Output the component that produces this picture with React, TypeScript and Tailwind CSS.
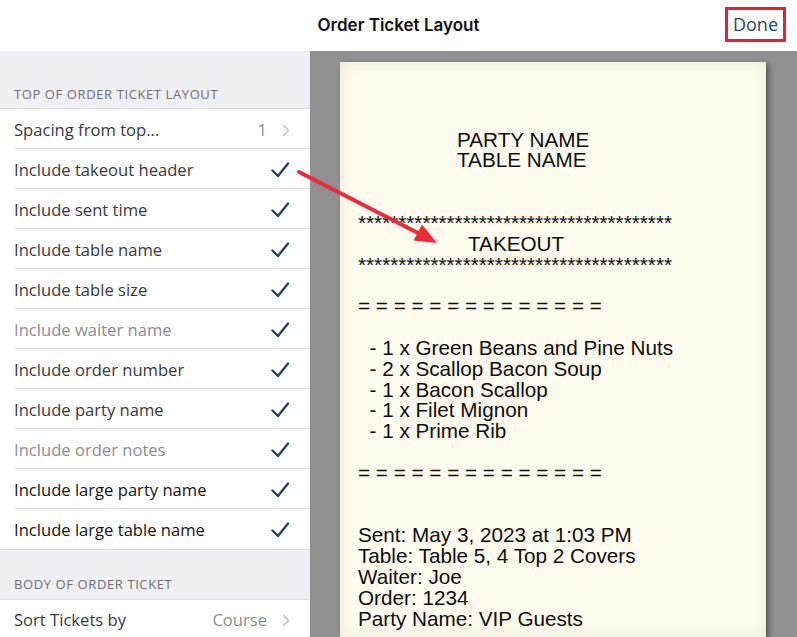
import React from "react";

const listFont = { fontFamily: '"Open Sans", "Noto Sans", sans-serif' };

function Check() {
  return (
    <svg width="19" height="16" viewBox="0 0 19 16" fill="none">
      <path d="M1.5 8.5 L7 14 L17 1.5" stroke="#1c4756" strokeWidth="2.4" strokeLinecap="round" strokeLinejoin="round" />
    </svg>
  );
}

function Chevron() {
  return (
    <svg width="8" height="13" viewBox="0 0 8 13" fill="none">
      <path d="M1.5 1.5 L6.5 6.5 L1.5 11.5" stroke="#c4c4c8" strokeWidth="1.6" strokeLinecap="round" strokeLinejoin="round" />
    </svg>
  );
}

type Row = { label: string; tone: "normal" | "muted" | "dark"; value?: string; chevron?: boolean; check?: boolean };

const topRows: Row[] = [
  { label: "Spacing from top...", tone: "normal", value: "1", chevron: true },
  { label: "Include takeout header", tone: "normal", check: true },
  { label: "Include sent time", tone: "normal", check: true },
  { label: "Include table name", tone: "normal", check: true },
  { label: "Include table size", tone: "normal", check: true },
  { label: "Include waiter name", tone: "muted", check: true },
  { label: "Include order number", tone: "normal", check: true },
  { label: "Include party name", tone: "normal", check: true },
  { label: "Include order notes", tone: "muted", check: true },
  { label: "Include large party name", tone: "dark", check: true },
  { label: "Include large table name", tone: "dark", check: true },
];

function ListRow({ row, last }: { row: Row; last: boolean }) {
  const color = row.tone === "muted" ? "text-[#8d8d8f]" : row.tone === "dark" ? "text-[#141414]" : "text-[#3a3a3a]";
  return (
    <div className="pl-[14px] bg-white">
      <div className={`h-[40px] flex items-center pr-[20px] pt-[3px] ${last ? "" : "border-b border-[#dcdce0]"}`}>
        <span className={`flex-1 text-[16.6px] ${color}`} style={listFont}>{row.label}</span>
        {row.value && <span className="text-[16.6px] text-[#8d8d8f] mr-[15px]" style={listFont}>{row.value}</span>}
        {row.chevron && <Chevron />}
        {row.check && <span className="-mt-[1px]"><Check /></span>}
      </div>
    </div>
  );
}

const stars = "*".repeat(39);
const eqs = Array(14).fill("=").join(" ");

type Line = { t: string; pl?: number };
const lines: Line[] = [
  { t: "PARTY NAME", pl: 99 },
  { t: "TABLE NAME", pl: 99 },
  { t: "" },
  { t: "" },
  { t: stars },
  { t: "TAKEOUT", pl: 110 },
  { t: stars },
  { t: "" },
  { t: eqs },
  { t: "" },
  { t: "  - 1 x Green Beans and Pine Nuts" },
  { t: "  - 2 x Scallop Bacon Soup" },
  { t: "  - 1 x Bacon Scallop" },
  { t: "  - 1 x Filet Mignon" },
  { t: "  - 1 x Prime Rib" },
  { t: "" },
  { t: eqs },
  { t: "" },
  { t: "" },
  { t: "Sent: May 3, 2023 at 1:03 PM" },
  { t: "Table: Table 5, 4 Top 2 Covers" },
  { t: "Waiter: Joe" },
  { t: "Order: 1234" },
  { t: "Party Name: VIP Guests" },
  { t: "" },
];

export default function App() {
  return (
    <div className="relative w-[797px] h-[637px] overflow-hidden bg-white flex flex-col">
      {/* Header */}
      <div className="h-[51px] shrink-0 flex items-center relative bg-white">
        <div className="flex-1 text-center text-[17px] font-semibold text-[#111] pt-[1px]" style={{ fontFamily: 'Inter, "Liberation Sans", sans-serif' }}>
          Order Ticket Layout
        </div>
        <div className="absolute right-[11px] top-[7px] w-[61px] h-[35px] border-[3px] border-[#e8202e] flex items-center justify-center">
          <span className="text-[18px] text-[#1f4b60]" style={listFont}>Done</span>
        </div>
      </div>

      <div className="flex flex-1 min-h-0">
        {/* Left settings list */}
        <div className="w-[310px] shrink-0 bg-[#efeff4] flex flex-col">
          <div className="h-[58px] shrink-0 flex items-end pl-[14px] pb-[4px] border-b border-[#dcdce0]">
            <span className="text-[13px] text-[#6e6e73] tracking-[0.6px]" style={listFont}>TOP OF ORDER TICKET LAYOUT</span>
          </div>
          {topRows.map((r, i) => (
            <ListRow key={r.label} row={r} last={i === topRows.length - 1} />
          ))}
          <div className="h-[51px] shrink-0 flex items-end pl-[14px] pb-[5px] border-y border-[#dcdce0]">
            <span className="text-[13px] text-[#6e6e73] tracking-[0.6px]" style={listFont}>BODY OF ORDER TICKET</span>
          </div>
          <div className="pl-[14px] bg-white">
            <div className="h-[40px] flex items-center pr-[20px] pt-[1px]">
              <span className="flex-1 text-[16.6px] text-[#3a3a3a]" style={listFont}>Sort Tickets by</span>
              <span className="text-[16.6px] text-[#8d8d8f] mr-[15px]" style={listFont}>Course</span>
              <Chevron />
            </div>
          </div>
        </div>

        {/* Right preview */}
        <div className="flex-1 bg-[#909090] pt-[11px] pl-[30px] pr-[31px] flex">
          <div
            className="flex-1 bg-[#fdfbee] pt-[67.6px] pl-[18px] shadow-[3px_2px_5px_rgba(0,0,0,0.4),inset_0_0_14px_rgba(120,110,70,0.12)] text-[20.7px] leading-[20.83px] text-[#0d0d0d]"
            style={{ fontFamily: '"Liberation Sans", Arial, sans-serif' }}
          >
            {lines.map((l, i) => (
              <div key={i} className="whitespace-pre h-[20.83px]" style={{ paddingLeft: l.pl ?? 0 }}>
                {l.t}
              </div>
            ))}
          </div>
        </div>
      </div>

      {/* Red annotation arrow */}
      <svg className="absolute left-0 top-0 pointer-events-none" width="797" height="637" viewBox="0 0 797 637">
        <line x1="299" y1="172" x2="420" y2="234" stroke="#ee2a3a" strokeWidth="4" strokeLinecap="round" />
        <polygon points="437,243 413.5,240.5 422,224.5" fill="#ee2a3a" />
      </svg>
    </div>
  );
}
